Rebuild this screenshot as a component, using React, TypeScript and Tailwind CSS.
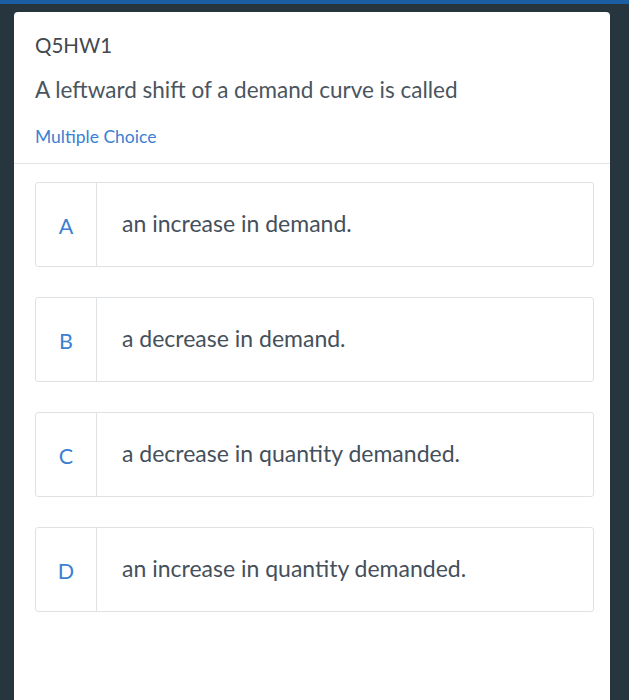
const options = [
  { letter: "A", text: "an increase in demand." },
  { letter: "B", text: "a decrease in demand." },
  { letter: "C", text: "a decrease in quantity demanded." },
  { letter: "D", text: "an increase in quantity demanded." },
];

export default function App() {
  return (
    <div
      className="relative h-[700px] w-[629px] overflow-hidden bg-[#27353f]"
      style={{ fontFamily: "Lato, 'Open Sans', sans-serif" }}
    >
      <div className="h-[4px] bg-[#1b5ea3]" />
      <div className="ml-[14px] mr-[19px] mt-[8px] h-[720px] rounded-[4px] bg-white">
        <div className="px-[21px] pt-[20px]">
          <h2 className="text-[20.5px] leading-[26px] text-[#41484f]">Q5HW1</h2>
          <p className="mt-[17px] text-[22.5px] leading-[30px] text-[#4a5560]">
            A leftward shift of a demand curve is called
          </p>
          <p className="mt-[21px] text-[17.5px] leading-[22px] text-[#3b80d1]">Multiple Choice</p>
        </div>
        <div className="mt-[15px] border-t border-[#e2e5e8]" />
        <div className="flex flex-col gap-[30px] pl-[21px] pr-[16px] pt-[18px]">
          {options.map((o) => (
            <div
              key={o.letter}
              className="flex h-[85px] items-center rounded-[3px] border border-[#dfe2e5]"
            >
              <div className="flex h-full w-[61px] items-center justify-center border-r border-[#dfe2e5] pt-[3px] text-[21.5px] text-[#3b80d1]">
                {o.letter}
              </div>
              <div className="pl-[25px] pb-[2px] text-[23px] text-[#45505b]">{o.text}</div>
            </div>
          ))}
        </div>
      </div>
    </div>
  );
}
